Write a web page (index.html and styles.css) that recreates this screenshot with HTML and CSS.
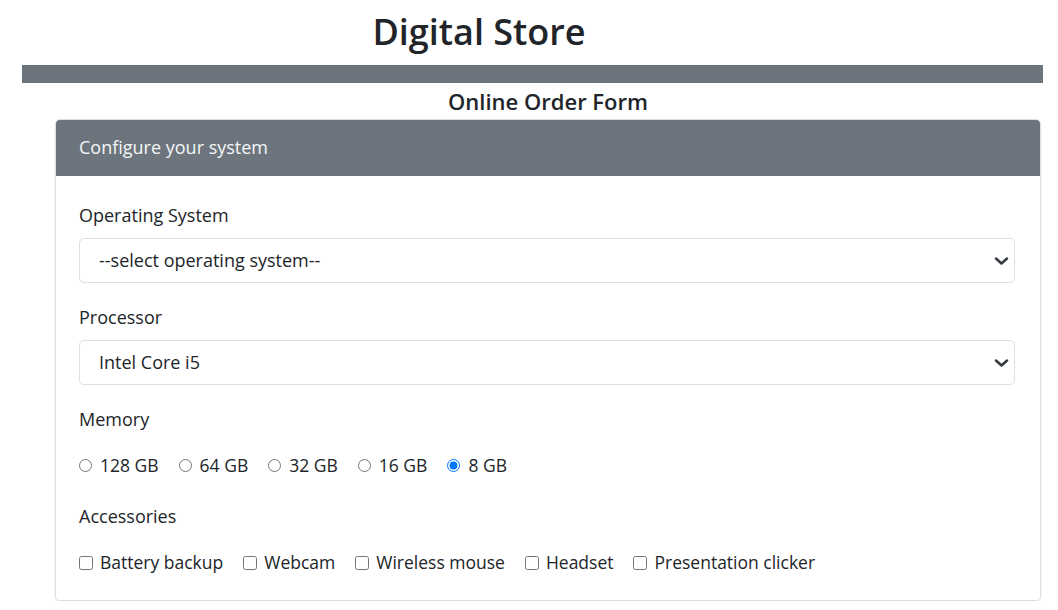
FILE: index.html
```html
<!DOCTYPE html>
<html lang="en">
<head>
    <meta charset="UTF-8">
    <meta name="viewport" content="width=device-width, initial-scale=1.0">
    <title>Digital Store - Online Order Form</title>
    <link rel="stylesheet" href="styles.css">
</head>
<body>
    <header class="site-header">
        <h1 class="site-title">Digital Store</h1>
        <div class="site-bar"></div>
    </header>

    <main class="order">
        <h2 class="order-title">Online Order Form</h2>
        <form class="card" id="orderForm">
            <div class="card-header">Configure your system</div>
            <div class="card-body">
                <div class="field">
                    <label for="os" class="field-label">Operating System</label>
                    <div class="select-wrap">
                        <select id="os" name="os" class="select">
                            <option value="" selected>--select operating system--</option>
                            <option value="win">Windows 11</option>
                            <option value="mac">macOS</option>
                            <option value="linux">Linux</option>
                        </select>
                        <svg class="select-arrow" viewBox="0 0 15 8" width="15" height="8"><path d="M2 1.5l5.5 5 5.5-5" fill="none" stroke="#343a40" stroke-width="2.5" stroke-linecap="round" stroke-linejoin="round"/></svg>
                    </div>
                </div>

                <div class="field">
                    <label for="cpu" class="field-label">Processor</label>
                    <div class="select-wrap">
                        <select id="cpu" name="cpu" class="select">
                            <option value="i3">Intel Core i3</option>
                            <option value="i5" selected>Intel Core i5</option>
                            <option value="i7">Intel Core i7</option>
                            <option value="i9">Intel Core i9</option>
                        </select>
                        <svg class="select-arrow" viewBox="0 0 15 8" width="15" height="8"><path d="M2 1.5l5.5 5 5.5-5" fill="none" stroke="#343a40" stroke-width="2.5" stroke-linecap="round" stroke-linejoin="round"/></svg>
                    </div>
                </div>

                <div class="field">
                    <div class="field-label">Memory</div>
                    <div class="choice-row">
                        <label class="choice"><input type="radio" name="memory" value="128"> 128 GB</label>
                        <label class="choice"><input type="radio" name="memory" value="64"> 64 GB</label>
                        <label class="choice"><input type="radio" name="memory" value="32"> 32 GB</label>
                        <label class="choice"><input type="radio" name="memory" value="16"> 16 GB</label>
                        <label class="choice"><input type="radio" name="memory" value="8" checked> 8 GB</label>
                    </div>
                </div>

                <div class="field">
                    <div class="field-label">Accessories</div>
                    <div class="choice-row">
                        <label class="choice"><input type="checkbox" name="acc" value="battery"> Battery backup</label>
                        <label class="choice"><input type="checkbox" name="acc" value="webcam"> Webcam</label>
                        <label class="choice"><input type="checkbox" name="acc" value="mouse"> Wireless mouse</label>
                        <label class="choice"><input type="checkbox" name="acc" value="headset"> Headset</label>
                        <label class="choice"><input type="checkbox" name="acc" value="clicker"> Presentation clicker</label>
                    </div>
                </div>
            </div>
        </form>
    </main>
</body>
</html>
```

FILE: styles.css
```css
body { margin: 0; font-family: "Open Sans", "Noto Sans", sans-serif; font-size: 18px; line-height: 27px; color: #212529; background-color: #fff; }

.site-title { margin: 9px 0 10px; padding-right: 100px; text-align: center; font-size: 36px; line-height: 46px; font-weight: 600; }
.site-bar { height: 18px; margin: 0 15px 0 22px; background-color: #6c757d; }

.order { margin: 0 17px 0 55px; }
.order-title { margin: 5px 0 4px; text-align: center; font-size: 22px; line-height: 27px; font-weight: 600; }

.card { border: 1px solid rgba(0, 0, 0, .13); border-radius: 5px; box-shadow: 0 1px 2px rgba(0, 0, 0, .08); overflow: hidden; }
.card-header { background-color: #6c757d; color: #f4f5f6; padding: 14px 23px 15px; }
.card-body { padding: 26px 25px 21px 23px; }

.field { margin-bottom: 21px; }
.field:last-child { margin-bottom: 0; }
.field-label { display: block; margin-bottom: 9px; }

.select-wrap { position: relative; }
.select { display: block; width: 100%; height: 45px; margin: 0; padding: 8px 40px 8px 19px; font: inherit; color: #212529; background-color: #fff; border: 1px solid #dcdfe3; border-radius: 5px; appearance: none; -webkit-appearance: none; }
.select-arrow { position: absolute; right: 6px; top: 19px; pointer-events: none; }

.choice-row { display: flex; flex-wrap: wrap; gap: 0 20px; padding: 10px 0 3px; font-size: 17.5px; }
.choice { display: flex; align-items: center; }
.choice input { margin: 0 7px 0 0; width: 14px; height: 14px; }
.choice input[type="radio"] { width: 13px; height: 13px; margin-right: 8px; }
```
